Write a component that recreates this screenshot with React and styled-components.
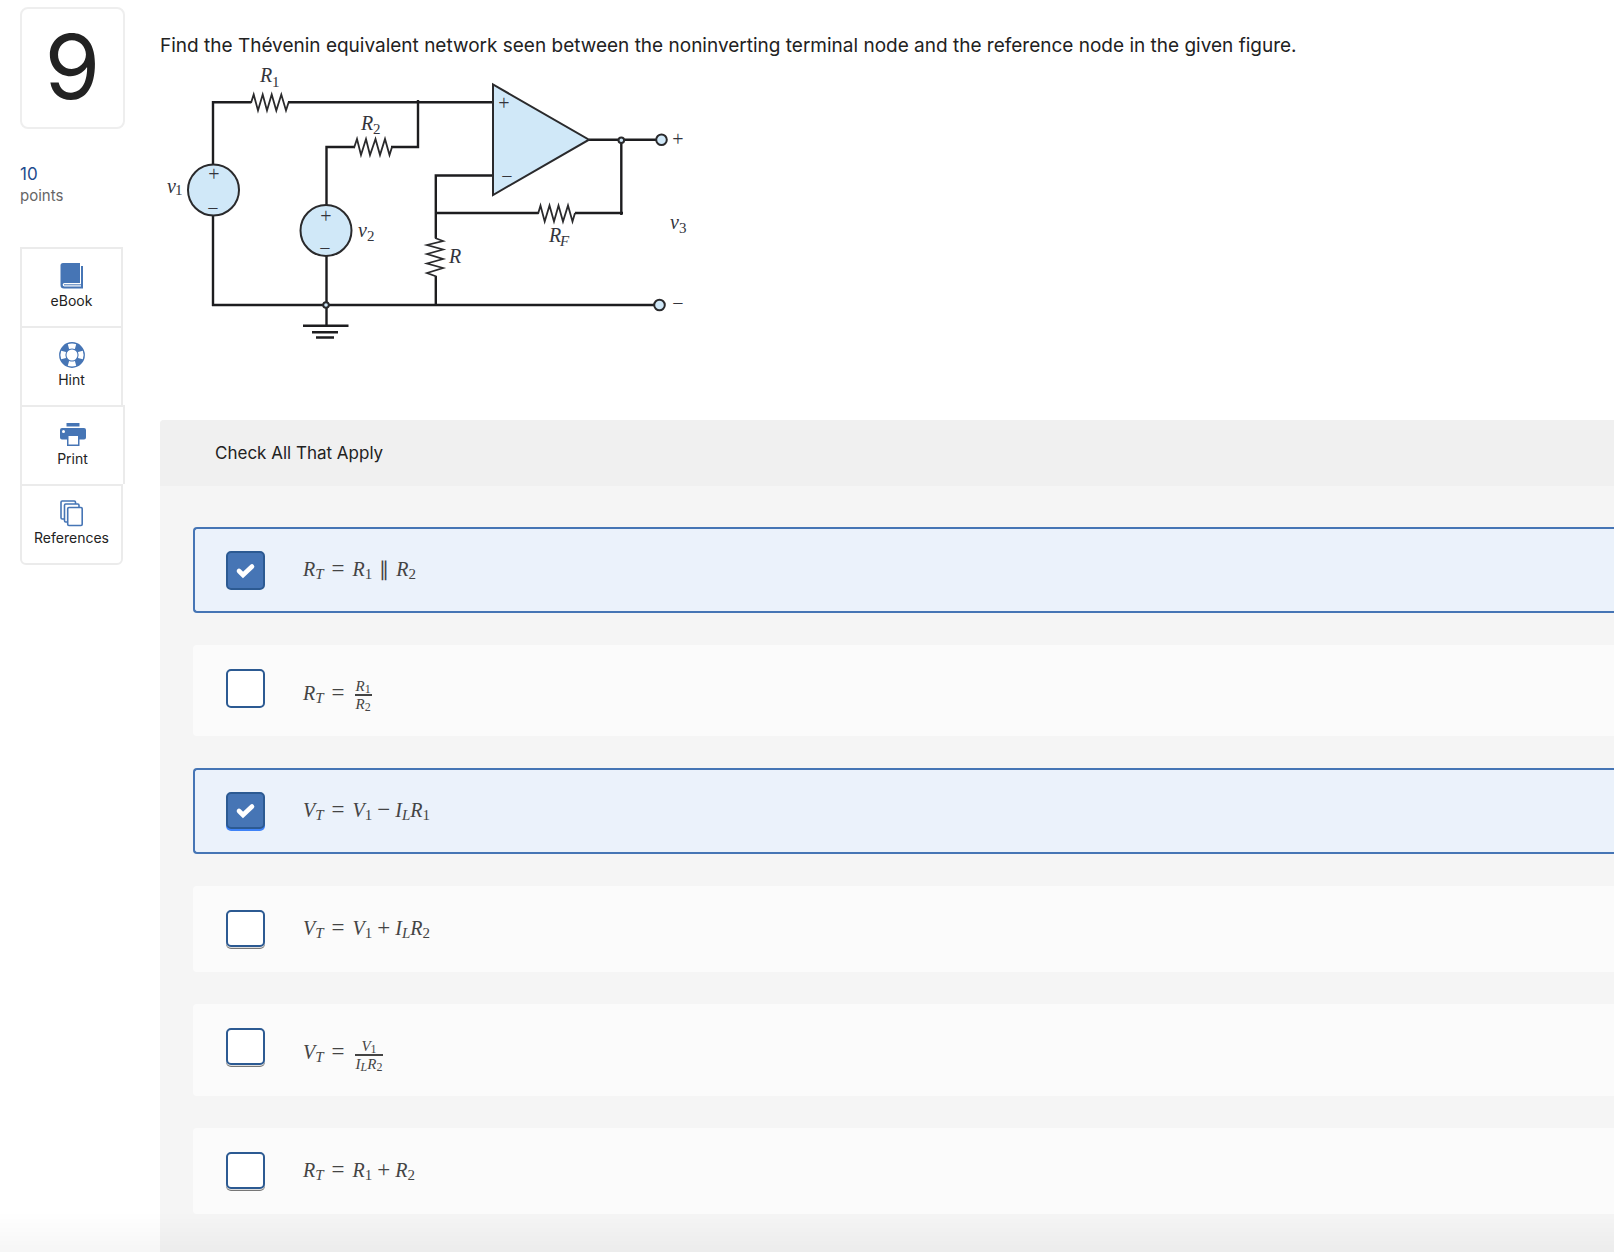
import React, { useState } from 'react'
import styled, { createGlobalStyle } from 'styled-components'

const GlobalStyle = createGlobalStyle`
    * {
        box-sizing: border-box;
    }
    body {
        margin: 0;
        background: #fff;
        color: #222;
        font-family: 'Inter', 'Open Sans', sans-serif;
    }
`

const Page = styled.div`
    display: flex;
    min-height: 100vh;
    overflow: hidden;
`

const Sidebar = styled.aside`
    flex: 0 0 160px;
    padding: 7px 0 0 20px;
`

const QuestionNumber = styled.div`
    display: flex;
    align-items: center;
    justify-content: center;
    width: 105px;
    height: 122px;
    padding-bottom: 2px;
    border: 2px solid #eee;
    border-radius: 8px;
    font-size: 90px;
    line-height: 116px;
`

const Points = styled.div`
    margin: 35px 0 41px;
    color: #666;
    font-size: 15px;
    line-height: 21px;
    strong {
        display: block;
        color: #1f4b8e;
        font-size: 17px;
        font-weight: 400;
    }
`

const Tools = styled.nav`
    display: flex;
    flex-direction: column;
    align-items: flex-start;
`

const ToolButton = styled.button`
    display: flex;
    flex-direction: column;
    align-items: center;
    gap: 1px;
    width: ${props => props.$wide ? 105 : 103}px;
    height: 79px;
    padding: 13px 0 0;
    border: 2px solid #ebebeb;
    border-bottom: 0;
    background: #fff;
    color: #222;
    font: inherit;
    font-size: 14px;
    line-height: 20px;
    cursor: pointer;
    &:last-child {
        height: 81px;
        border-bottom: 2px solid #ebebeb;
        border-radius: 0 0 6px 6px;
    }
    svg {
        display: block;
        width: 28px;
        height: 28px;
    }
`

const Main = styled.main`
    display: flex;
    flex-direction: column;
    flex: 1;
    min-width: 0;
`

const Question = styled.p`
    margin: 0;
    padding-top: 33px;
    font-size: 19px;
    line-height: 26px;
`

const Figure = styled.svg`
    display: block;
    width: 540px;
    height: 290px;
    margin: 1px 0 70px;
    .wire {
        fill: none;
        stroke: #1d1d1f;
        stroke-width: 2.4;
    }
    .zigzag {
        fill: none;
        stroke: #2a2a2c;
        stroke-width: 1.8;
    }
    .part {
        fill: #d0e8f8;
        stroke: #2a2a2c;
        stroke-width: 2;
    }
    text {
        fill: #33343c;
        font-family: 'Liberation Serif', serif;
        font-size: 20px;
    }
    .sign {
        text-anchor: middle;
    }
    .name {
        font-style: italic;
    }
    .sub {
        font-size: 15px;
    }
`

const Panel = styled.fieldset`
    display: flex;
    flex-direction: column;
    flex: 1;
    min-width: 0;
    margin: 0;
    padding: 0;
    border: 0;
    border-radius: 4px 0 0 0;
    background: #f5f5f5;
    overflow: hidden;
`

const PanelTitle = styled.legend`
    float: left;
    width: 100%;
    padding: 20px 55px;
    background: #f0f0f0;
    font-size: 17px;
    line-height: 26px;
`

const Choices = styled.div`
    display: flex;
    flex-direction: column;
    gap: 32px;
    padding: 41px 0 40px 33px;
`

const Choice = styled.label`
    display: flex;
    align-items: flex-start;
    gap: 38px;
    min-height: 86px;
    padding: 22px 31px;
    border: 2px solid ${props => props.$checked ? '#4675b5' : '#fbfbfb'};
    border-right: 0;
    border-radius: 4px 0 0 4px;
    background: ${props => props.$checked ? '#ebf2fb' : '#fbfbfb'};
    cursor: pointer;
`

const CheckCell = styled.span`
    display: grid;
    flex: none;
    width: 39px;
    height: 38px;
    & > * {
        grid-area: 1 / 1;
    }
    svg {
        place-self: center;
        width: 22px;
        height: 22px;
        pointer-events: none;
    }
`

const CheckBox = styled.input`
    appearance: none;
    width: 39px;
    height: ${props => props.$raised ? 37 : 39}px;
    margin: 0;
    border: 2px solid #2c5a92;
    border-radius: 5px;
    background: #fff;
    box-shadow: ${props => props.$raised ? '0 1px 0 #ddd, 0 2px 0 #777' : 'none'};
    cursor: pointer;
    &:checked {
        background: #4675b5;
        box-shadow: ${props => props.$raised ? '0 2px 0 #3f83f8' : 'none'};
    }
`

const Formula = styled.span`
    padding-top: ${props => props.$tall ? 6 : 0}px;
    color: #444;
    font-family: 'Liberation Serif', serif;
    font-size: 20px;
    line-height: 36px;
    white-space: nowrap;
`

const Sub = styled.sub`
    font-size: 15px;
    line-height: 0;
    vertical-align: -3px;
`

const Operator = styled.span`
    margin: 0 ${props => props.$space}px;
    font-size: ${props => props.$size || 23}px;
    line-height: 0;
`

const Fraction = styled.span`
    display: inline-flex;
    flex-direction: column;
    align-items: stretch;
    margin-left: 2px;
    text-align: center;
    vertical-align: middle;
    font-size: 15px;
    line-height: 16px;
    & > span {
        padding: 0 1px;
    }
    & > span:first-child {
        border-bottom: 2px solid #444;
    }
    ${Sub} {
        font-size: 12px;
        vertical-align: -2px;
    }
`

// soft shadow along the bottom of the window, over whatever is scrolled there
const BottomShade = styled.div`
    position: fixed;
    right: 0;
    bottom: 0;
    left: 0;
    height: 40px;
    background: linear-gradient(transparent, rgba(0, 0, 0, 0.035));
    pointer-events: none;
`

const BookIcon = () => (
    <svg viewBox="0 0 28 28" fill="#4675b5" aria-hidden="true">
        <path d="M5 1h17v20H6.5a1.7 1.7 0 0 0 0 3.6H23V4h2v22.6H6A3.6 3.6 0 0 1 2.5 23V3.5A2.5 2.5 0 0 1 5 1z" />
        <path d="M6 22.3h17v1H6z" />
    </svg>
)

const HintIcon = () => (
    <svg viewBox="0 0 28 28" aria-hidden="true">
        <circle cx="14" cy="14" r="9.2" fill="none" stroke="#4675b5" strokeWidth="7.400" />
        <g fill="#fff">
            <path d="M9.800 3.200Q14 1.600 18.200 3.200L16.900 8Q14 6.800 11.100 8z" />
            <path d="M9.800 24.800Q14 26.400 18.200 24.800L16.900 20Q14 21.200 11.100 20z" />
            <path d="M3.200 9.800Q1.600 14 3.200 18.200L8 16.900Q6.800 14 8 11.100z" />
            <path d="M24.800 9.800Q26.400 14 24.800 18.200L20 16.900Q21.200 14 20 11.100z" />
        </g>
    </svg>
)

const PrintIcon = () => (
    <svg viewBox="0 0 28 28" fill="#4675b5" aria-hidden="true">
        <path d="M7.5 3h13v3.5h-13z" />
        <path d="M3 8h22a2 2 0 0 1 2 2v7.5a2 2 0 0 1-2 2h-4.500V26H8v-6.500H3a2 2 0 0 1-2-2V10a2 2 0 0 1 2-2z" />
        <path fill="#fff" d="M9.500 16h9.500v8.500H9.500z" />
        <circle cx="4.500" cy="11.500" r="1.500" fill="#fff" />
    </svg>
)

const ReferencesIcon = () => (
    <svg viewBox="0 0 28 28" fill="#fff" stroke="#4675b5" strokeWidth="1.600" aria-hidden="true">
        <rect x="3" y="2" width="14.500" height="18" rx="1.200" />
        <rect x="6.500" y="5" width="14.500" height="18" rx="1.200" />
        <rect x="9.700" y="8.500" width="14.500" height="18" rx="1.200" />
    </svg>
)

const Tick = () => (
    <svg viewBox="0 0 22 22" fill="none" stroke="#fff" strokeWidth="4.600" aria-hidden="true">
        <path strokeLinecap="round" strokeLinejoin="miter" d="M4 11l4 4L17 6.500" />
    </svg>
)

// the viewBox keeps the left and top of the drawing at 160, 60
const Circuit = () => (
    <Figure viewBox="160 60 540 290" role="img" aria-label="Op-amp circuit with two sources">
        <path className="wire" d="M213 306V102.300H251M288 102.300H493M418 100V147H391M355 147H326.500V325M212 305H654" />
        <path className="wire" d="M493 175.500H435.800V238M435.800 276V305M435.800 213H538M575 213H623M621.300 140V215M589 139.700H656" />
        <path className="wire" d="M303 325.700H348.500M312 332.300H338M316 337.500H334" />
        <path className="zigzag" d="M251 103L253.700 94.500L258 110.500L262.700 94.500L267 110.500L271.700 94.500L276.300 110.500L281.300 94.500L286 110.500L288.700 102" />
        <path className="zigzag" d="M354 148L357 139L361 155L366 139L370 155L375.500 139L380 155L385 139L389.500 155L392 147" />
        <path className="zigzag" d="M538 214L540.500 205.500L544.700 221.500L549.500 205.500L554 221.500L558.500 205.500L563 221.500L568 205.500L572.500 221.500L575 213" />
        <path className="zigzag" d="M435 238L443 241L427 245L443 249.500L427 254L443 259L427 263.500L443 268L427 273L436.500 276.500" />
        <circle className="part" cx="213.500" cy="190" r="25.500" />
        <circle className="part" cx="326" cy="230.500" r="25.500" />
        <path className="part" d="M493 84.500V195L589 139.700z" />
        <circle className="part" cx="326" cy="305" r="2.800" />
        <circle className="part" cx="621.300" cy="140.300" r="2.800" />
        <circle className="part" cx="661.500" cy="139.700" r="5.300" />
        <circle className="part" cx="659.500" cy="305" r="5.300" />

        <text className="sign" x="214" y="181">+</text>
        <text className="sign" x="213" y="215">−</text>
        <text className="sign" x="326" y="223">+</text>
        <text className="sign" x="325" y="255">−</text>
        <text className="sign" x="504" y="110">+</text>
        <text className="sign" x="507" y="183">−</text>
        <text className="sign" x="678" y="146">+</text>
        <text className="sign" x="678" y="310">−</text>

        <text className="name" x="260" y="82">R</text>
        <text className="sub" x="272" y="87">1</text>
        <text className="name" x="361" y="130">R</text>
        <text className="sub" x="373" y="134">2</text>
        <text className="name" x="167" y="193">v</text>
        <text className="sub" x="175" y="195">1</text>
        <text className="name" x="358" y="237">v</text>
        <text className="sub" x="367" y="241">2</text>
        <text className="name" x="549" y="242">R</text>
        <text className="name sub" x="560" y="246">F</text>
        <text className="name" x="449" y="263">R</text>
        <text className="name" x="670" y="229">v</text>
        <text className="sub" x="679" y="233">3</text>
    </Figure>
)

const Var = ({ name, sub }) => (
    <>
        <i>{name}</i>
        <Sub>{sub}</Sub>
    </>
)

const Equals = () => <Operator $space={8}>=</Operator>

const I_L = <Var name="I" sub={<i>L</i>} />
const R_T = <Var name="R" sub={<i>T</i>} />
const V_T = <Var name="V" sub={<i>T</i>} />
const R_1 = <Var name="R" sub="1" />
const R_2 = <Var name="R" sub="2" />
const V_1 = <Var name="V" sub="1" />

const choices = [
    { id: 'parallel', formula: <>{R_T}<Equals />{R_1}<Operator $space={7} $size={20}>∥</Operator>{R_2}</> },
    { id: 'ratio', tall: true, formula: <>{R_T}<Equals /><Fraction><span>{R_1}</span><span>{R_2}</span></Fraction></> },
    { id: 'drop', raised: true, formula: <>{V_T}<Equals />{V_1}<Operator $space={5}>−</Operator>{I_L}{R_1}</> },
    { id: 'rise', raised: true, formula: <>{V_T}<Equals />{V_1}<Operator $space={5}>+</Operator>{I_L}{R_2}</> },
    { id: 'quotient', raised: true, tall: true, formula: <>{V_T}<Equals /><Fraction><span>{V_1}</span><span>{I_L}{R_2}</span></Fraction></> },
    { id: 'sum', raised: true, formula: <>{R_T}<Equals />{R_1}<Operator $space={5}>+</Operator>{R_2}</> },
]

const App = () => {
    const [checked, setChecked] = useState({ parallel: true, drop: true })

    const toggle = (id) => {
        setChecked({ ...checked, [id]: !checked[id] })
    }

    return (
        <Page>
            <GlobalStyle />
            <Sidebar>
                <QuestionNumber>9</QuestionNumber>
                <Points>
                    <strong>10</strong>
                    points
                </Points>
                <Tools>
                    <ToolButton type="button"><BookIcon />eBook</ToolButton>
                    <ToolButton type="button"><HintIcon />Hint</ToolButton>
                    <ToolButton type="button" $wide><PrintIcon />Print</ToolButton>
                    <ToolButton type="button"><ReferencesIcon />References</ToolButton>
                </Tools>
            </Sidebar>
            <Main>
                <Question>
                    Find the Thévenin equivalent network seen between the noninverting terminal node and the reference node in the given figure.
                </Question>
                <Circuit />
                <Panel>
                    <PanelTitle>Check All That Apply</PanelTitle>
                    <Choices>
                        {choices.map(item => (
                            <Choice key={item.id} $checked={!!checked[item.id]}>
                                <CheckCell>
                                    <CheckBox
                                        type="checkbox"
                                        $raised={item.raised}
                                        checked={!!checked[item.id]}
                                        onChange={() => toggle(item.id)}
                                    />
                                    {checked[item.id] && <Tick />}
                                </CheckCell>
                                <Formula $tall={item.tall}>{item.formula}</Formula>
                            </Choice>
                        ))}
                    </Choices>
                </Panel>
            </Main>
            <BottomShade />
        </Page>
    )
}

export default App
